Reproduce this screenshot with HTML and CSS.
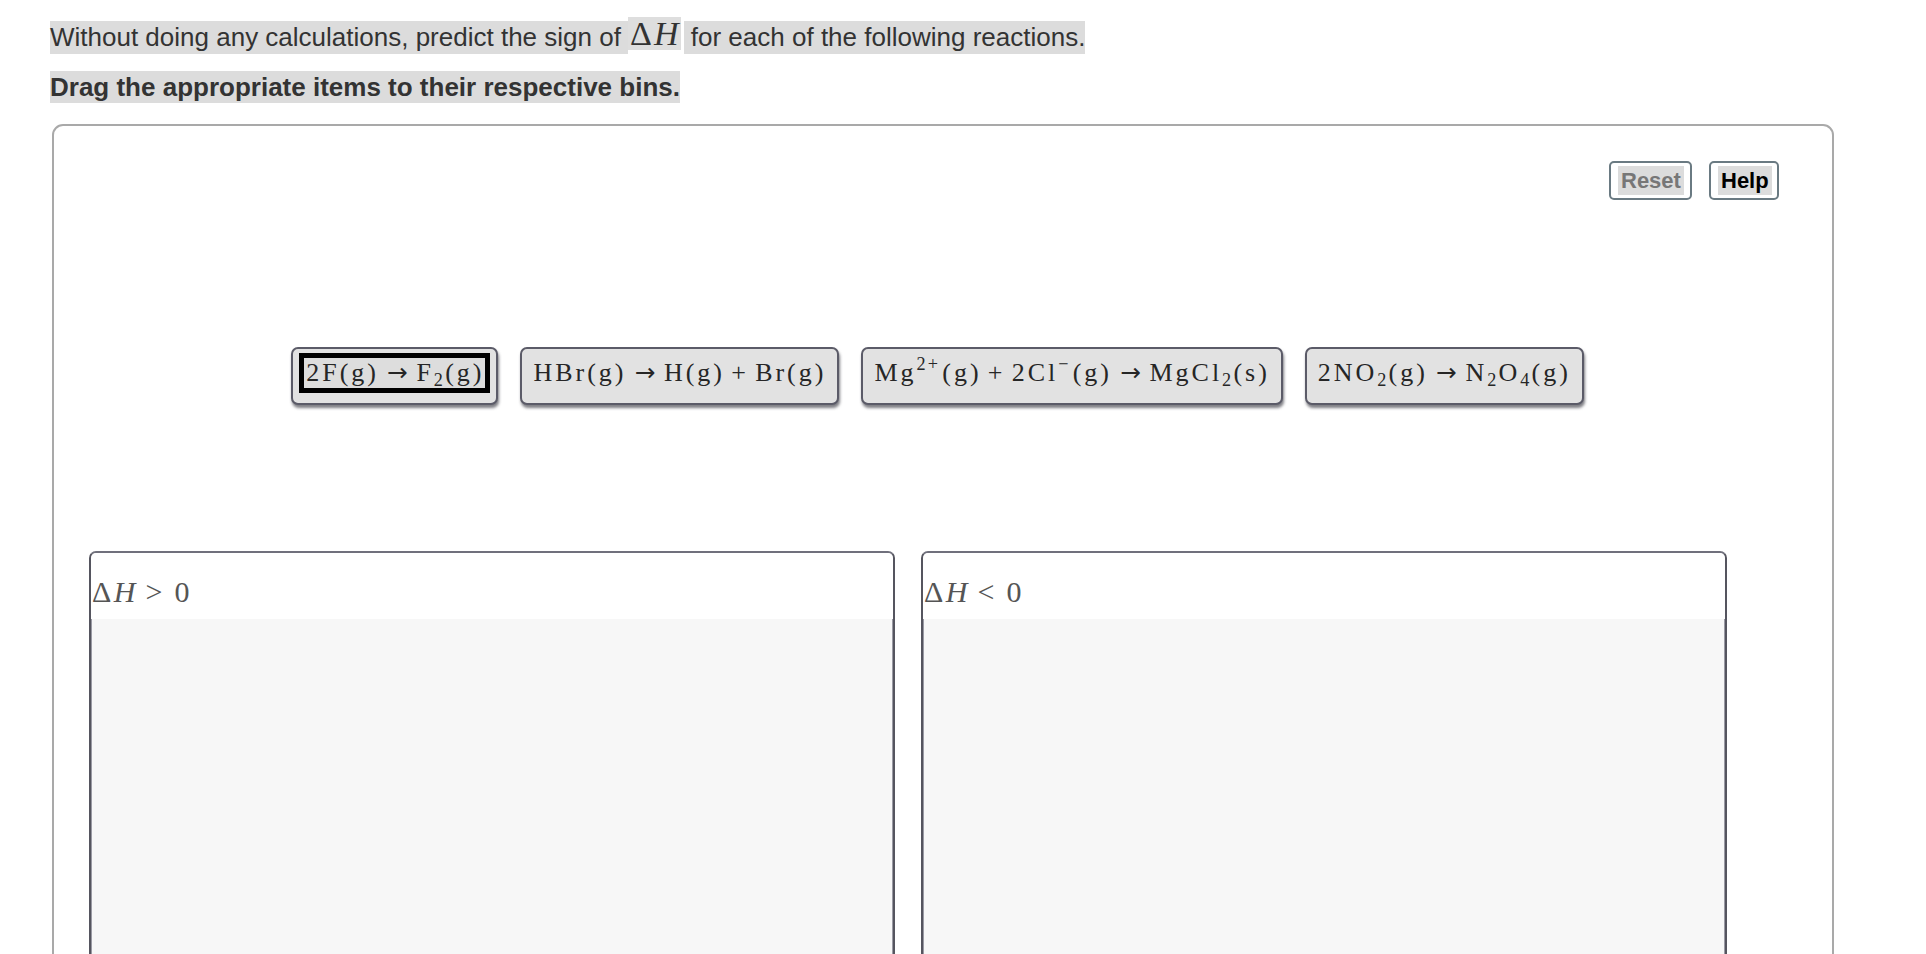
FILE: index.html
```html
<!DOCTYPE html>
<html lang="en">
<head>
<meta charset="utf-8">
<title>Predict the sign of ΔH</title>
<link rel="stylesheet" href="styles.css">
</head>
<body>
<div class="page">
  <p class="question"><span class="hl">Without doing any calculations, predict the sign of </span><span class="math-hl"><span class="mq">Δ<i>H</i></span></span><span class="hl"> for each of the following reactions. </span></p>
  <p class="instr"><span class="hl">Drag the appropriate items to their respective bins. </span></p>

  <div class="box">
    <div class="toolbar">
      <button class="btn reset"><span class="btn-hl">Reset</span></button>
      <button class="btn help"><span class="btn-hl">Help</span></button>
    </div>

    <div class="items">
      <div class="item focused"><span class="focus-ring">2F(g)<span class="arrow">→</span>F<sub>2</sub>(g)</span></div>
      <div class="item">HBr(g)<span class="arrow">→</span>H(g)<span class="bin-op">+</span>Br(g)</div>
      <div class="item">Mg<sup>2+</sup>(g)<span class="bin-op">+</span>2Cl<sup>−</sup>(g)<span class="arrow">→</span>MgCl<sub>2</sub>(s)</div>
      <div class="item">2NO<sub>2</sub>(g)<span class="arrow">→</span>N<sub>2</sub>O<sub>4</sub>(g)</div>
    </div>

    <div class="bins">
      <div class="bin">
        <div class="bin-head"><span class="bin-label">Δ<i>H</i><span class="rel">&gt;</span>0</span></div>
        <div class="bin-body"></div>
      </div>
      <div class="bin">
        <div class="bin-head"><span class="bin-label">Δ<i>H</i><span class="rel">&lt;</span>0</span></div>
        <div class="bin-body"></div>
      </div>
    </div>
  </div>
</div>
</body>
</html>
```

FILE: styles.css
```css
html, body {
  margin: 0;
  padding: 0;
  background: #ffffff;
}

body {
  font-family: "Liberation Sans", Arial, Helvetica, sans-serif;
  color: #333333;
  overflow: hidden;
}

.page {
  padding: 21px 0 0 50px;
}

.question {
  margin: 0;
  font-size: 26px;
  line-height: 32px;
  height: 32px;
  white-space: nowrap;
}

.hl {
  background: #dcdcdc;
  padding: 1px 0 2px 0;
}

.math-hl {
  display: inline-block;
  background: #dedede;
  vertical-align: top;
  margin-top: -4px;
  height: 33px;
  padding: 0 2px;
  margin-right: 3px;
}

.mq {
  font-family: "Liberation Serif", "Times New Roman", serif;
  font-size: 34px;
  line-height: 33px;
  letter-spacing: 0.06em;
  color: #333333;
}

.mq i {
  letter-spacing: 0;
}

.instr {
  margin: 19px 0 0 0;
  font-size: 26px;
  font-weight: bold;
  line-height: 31px;
  height: 31px;
  white-space: nowrap;
}

.instr .hl {
  padding: 1px 0 1px 0;
}

.box {
  margin: 21px 0 0 2px;
  width: 1778px;
  height: 900px;
  border: 2px solid #a9a9a9;
  border-radius: 11px;
  box-sizing: content-box;
}

.toolbar {
  display: flex;
  justify-content: flex-end;
  gap: 17px;
  padding: 35px 53px 0 0;
}

.btn {
  height: 39px;
  border: 2px solid #6a7a82;
  border-radius: 5px;
  background: #ffffff;
  padding: 0 7px;
  font-family: "Liberation Sans", Arial, sans-serif;
  font-size: 22px;
  font-weight: bold;
  cursor: pointer;
}

.btn-hl {
  display: inline-block;
  background: #dcdcdc;
  line-height: 29px;
  padding: 0 3px;
}

.reset {
  width: 83px;
  color: #777777;
}

.help {
  width: 70px;
  color: #000000;
}

.items {
  display: flex;
  justify-content: center;
  gap: 22px;
  margin-top: 147px;
  padding-right: 11px;
}

.item {
  background: #e2e2e2;
  border: 2px solid #5b5b68;
  border-radius: 7px;
  box-shadow: 1px 3px 3px rgba(40, 40, 50, 0.6);
  font-family: "Liberation Serif", "Times New Roman", serif;
  font-size: 26px;
  letter-spacing: 0.115em;
  color: #262626;
  height: 58px;
  line-height: 34px;
  padding: 7px 11px 0 11px;
  box-sizing: border-box;
  white-space: nowrap;
}

.item.focused {
  padding: 4px 6px 0 6px;
}

.focus-ring {
  display: inline-block;
  border: 5px solid #000000;
  background: #dddddd;
  line-height: 30px;
  padding: 0 1px 0 2px;
}

.arrow {
  font-family: "DejaVu Sans", sans-serif;
  font-size: 0.95em;
  margin: 0 0.34em;
  letter-spacing: 0;
}

.rel {
  margin: 0 0.32em;
}

.bin-op {
  margin: 0 0.24em;
}

sub, sup {
  font-size: 0.7em;
  line-height: 0;
  letter-spacing: 0.12em;
}

sub {
  vertical-align: -0.25em;
}

sup {
  vertical-align: 0.6em;
  margin-right: 2px;
}

.bins {
  display: flex;
  gap: 26px;
  margin-top: 146px;
  padding-left: 35px;
}

.bin {
  width: 806px;
  height: 420px;
  border: 2px solid #55555f;
  border-top-color: #70707c;
  border-radius: 7px;
  box-sizing: border-box;
  overflow: hidden;
  box-shadow: inset 1px 0 0 #9a9aa4, inset -1px 0 0 #9a9aa4;
  background: #f7f7f7;
}

.bin-head {
  height: 66px;
  background: #ffffff;
  padding-top: 21px;
  box-sizing: border-box;
}

.bin-label {
  font-family: "Liberation Serif", "Times New Roman", serif;
  font-size: 30px;
  letter-spacing: 0.08em;
  color: #555555;
  line-height: 36px;
  padding-left: 1px;
}

.bin-label i {
  letter-spacing: 0.02em;
}

.bin-body {
  height: 100%;
}
```
